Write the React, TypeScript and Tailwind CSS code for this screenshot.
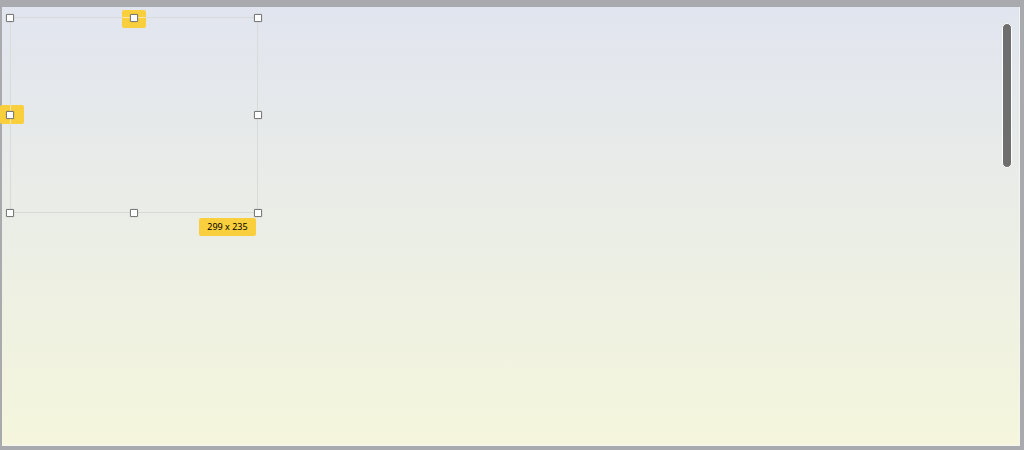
import React from "react";

const Handle = ({ className }: { className: string }) => (
  <div
    className={`absolute h-[8px] w-[8px] rounded-[1px] border border-[#7a7a7a] bg-white shadow-[0_0_1px_rgba(0,0,0,0.4)] ${className}`}
  />
);

export default function App() {
  return (
    <div className="flex h-[450px] w-[1024px] flex-col bg-[#a8aaad] pb-[4px] pl-[2px] pr-[4px] pt-[7px]">
      <div className="relative flex-1 border-b border-r border-[#f4f4f0] bg-gradient-to-b from-[#e1e5ef] to-[#f5f6dc]">
        {/* selection rectangle */}
        <div className="absolute left-[8px] top-[10px] h-[196px] w-[248px] border border-[#d9dbd9]" />

        {/* top yellow tab */}
        <div className="absolute left-[120px] top-[3px] h-[18px] w-[24px] rounded-[2px] bg-[#f9cf3d]">
          <div className="absolute left-0 right-0 top-[7px] h-px bg-[#f6e6a8]" />
        </div>
        {/* left yellow tab */}
        <div className="absolute left-[-2px] top-[98px] h-[19px] w-[24px] rounded-[2px] bg-[#f9cf3d]">
          <div className="absolute bottom-0 top-0 left-[10px] w-px bg-[#f6e6a8]" />
        </div>

        <Handle className="left-[4px] top-[7px]" />
        <Handle className="left-[128px] top-[7px]" />
        <Handle className="left-[252px] top-[7px]" />
        <Handle className="left-[4px] top-[104px]" />
        <Handle className="left-[252px] top-[104px]" />
        <Handle className="left-[4px] top-[202px]" />
        <Handle className="left-[128px] top-[202px]" />
        <Handle className="left-[252px] top-[202px]" />

        {/* size label */}
        <div className="absolute left-[197px] top-[211px] flex h-[18px] w-[57px] items-center justify-center rounded-[2px] bg-[#f9cf3d] font-['Noto_Sans',sans-serif] text-[9px] text-black">
          299 x 235
        </div>

        {/* scrollbar */}
        <div className="absolute left-[1000px] top-[16px] h-[145px] w-[10px] rounded-full border border-white bg-[#6e6e6e]" />
      </div>
    </div>
  );
}
